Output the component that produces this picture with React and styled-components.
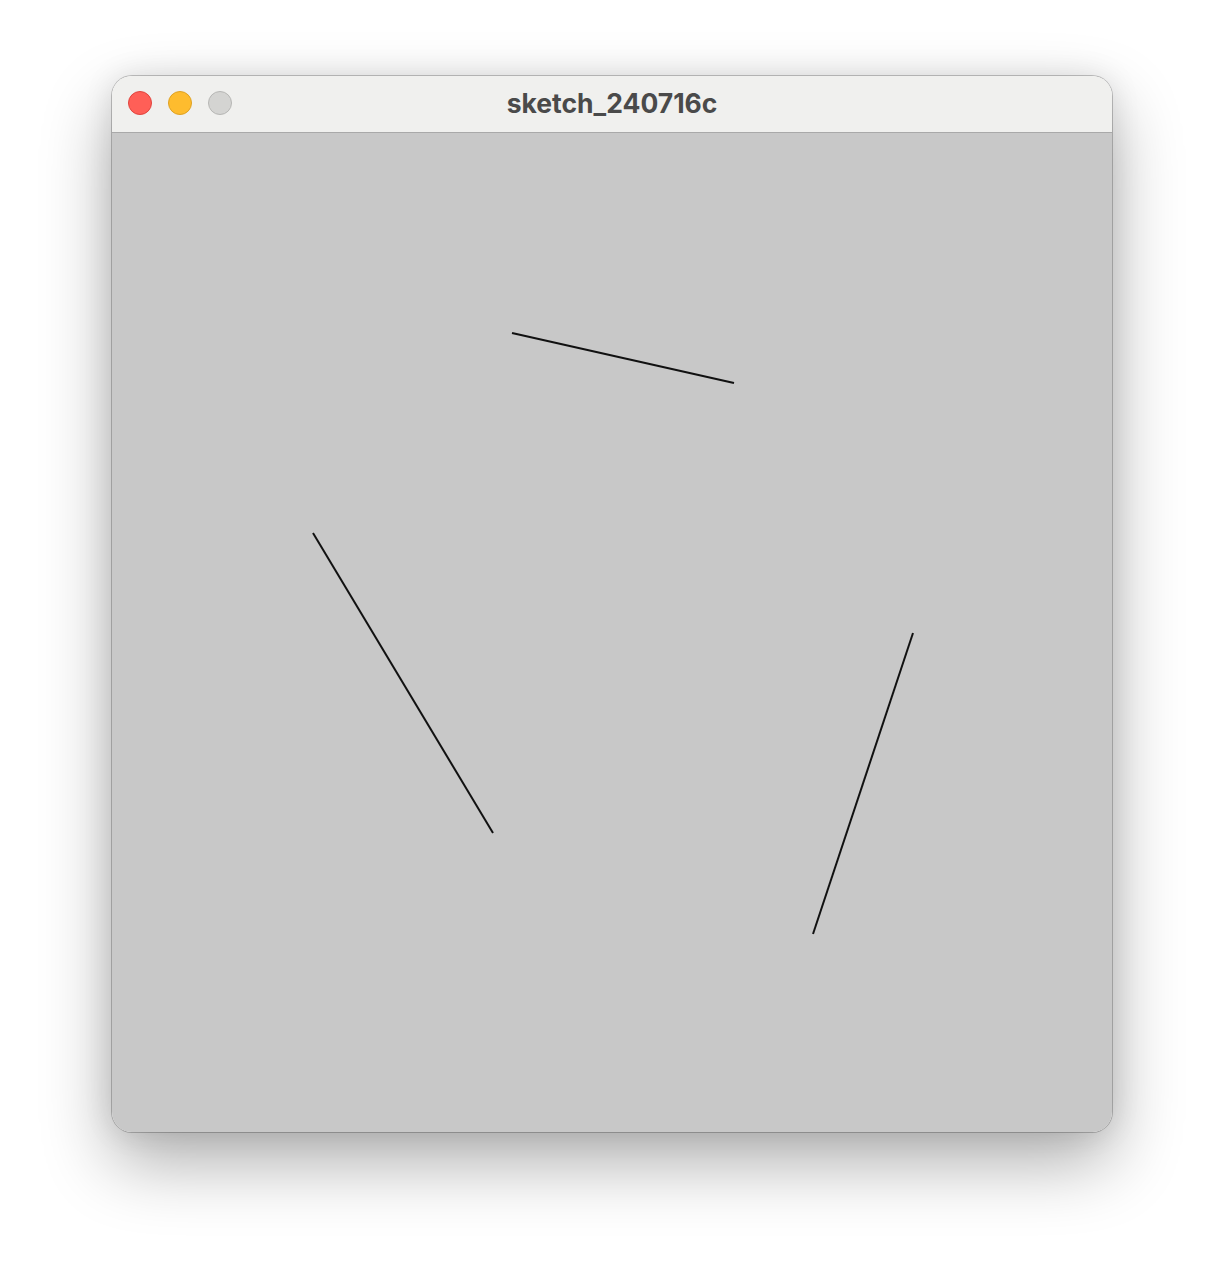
import React from "react"
import styled, { createGlobalStyle } from "styled-components"

const GlobalStyle = createGlobalStyle`
  html, body {
    margin: 0;
    padding: 0;
    background: #ffffff;
  }
  body {
    font-family: Inter, "Liberation Sans", sans-serif;
  }
`

const Page = styled.div`
  display: flex;
  justify-content: center;
  padding-top: 76px;
  height: 1280px;
  box-sizing: border-box;
`

const Window = styled.div`
  width: 1000px;
  height: 1056px;
  border-radius: 20px;
  overflow: hidden;
  box-shadow: 0 0 0 1px rgba(0, 0, 0, 0.22), 0 30px 70px rgba(0, 0, 0, 0.32),
    0 0 30px rgba(0, 0, 0, 0.1);
  display: flex;
  flex-direction: column;
`

const TitleBar = styled.div`
  height: 56px;
  flex: none;
  background: #f0f0ee;
  border-bottom: 1px solid #a9a9a9;
  display: grid;
  grid-template-columns: 1fr auto 1fr;
  align-items: center;
  padding: 0 16px;
`

const Lights = styled.div`
  display: flex;
  gap: 16px;
  padding-bottom: 2px;
`

const Light = styled.span`
  width: 22px;
  height: 22px;
  border-radius: 50%;
  background: ${(p) => p.$fill};
  border: 1px solid ${(p) => p.$edge};
`

const Title = styled.div`
  font-size: 26.5px;
  font-weight: 700;
  color: #4a4a4a;
  padding-bottom: 2px;
`

const Canvas = styled.svg`
  display: block;
  flex: none;
  width: 1000px;
  height: 1000px;
  background: #c8c8c8;
`

const lines = [
  [400, 200, 622, 250],
  [201, 400, 381, 700],
  [801, 500, 701, 801],
]

const App = () => (
  <>
    <GlobalStyle />
    <Page>
      <Window>
        <TitleBar>
          <Lights>
            <Light $fill="#ff5f57" $edge="#e0443e" />
            <Light $fill="#febc2e" $edge="#dea123" />
            <Light $fill="#d4d4d2" $edge="#b6b6b4" />
          </Lights>
          <Title>sketch_240716c</Title>
          <span />
        </TitleBar>
        <Canvas viewBox="0 0 1000 1000">
          {lines.map(([x1, y1, x2, y2], i) => (
            <line
              key={i}
              x1={x1}
              y1={y1}
              x2={x2}
              y2={y2}
              stroke="#111"
              strokeWidth="2"
            />
          ))}
        </Canvas>
      </Window>
    </Page>
  </>
)

export default App
